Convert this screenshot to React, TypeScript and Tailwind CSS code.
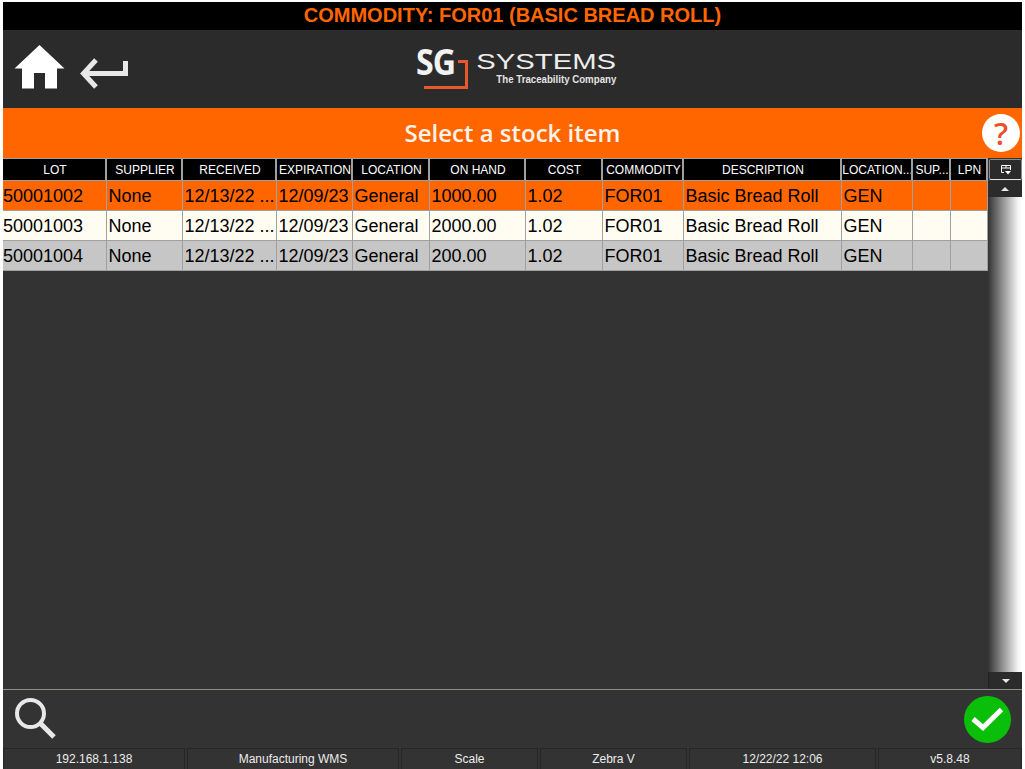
import React from 'react';

const columns = [
  { name: 'LOT', width: 'w-[104px]' },
  { name: 'SUPPLIER', width: 'w-[76px]' },
  { name: 'RECEIVED', width: 'w-[94px]' },
  { name: 'EXPIRATION', width: 'w-[76px]' },
  { name: 'LOCATION', width: 'w-[77px]' },
  { name: 'ON HAND', width: 'w-[96px]' },
  { name: 'COST', width: 'w-[77px]' },
  { name: 'COMMODITY', width: 'w-[81px]' },
  { name: 'DESCRIPTION', width: 'w-[158px]' },
  { name: 'LOCATION...', width: 'w-[71px]' },
  { name: 'SUP...', width: 'w-[38px]' },
  { name: 'LPN', width: 'w-[37px]' },
];

const rows = [
  { bg: 'bg-[#ff6600]', cells: ['50001002', 'None', '12/13/22 ...', '12/09/23', 'General', '1000.00', '1.02', 'FOR01', 'Basic Bread Roll', 'GEN', '', ''] },
  { bg: 'bg-[#fffdf2]', cells: ['50001003', 'None', '12/13/22 ...', '12/09/23', 'General', '2000.00', '1.02', 'FOR01', 'Basic Bread Roll', 'GEN', '', ''] },
  { bg: 'bg-[#c6c6c6]', cells: ['50001004', 'None', '12/13/22 ...', '12/09/23', 'General', '200.00', '1.02', 'FOR01', 'Basic Bread Roll', 'GEN', '', ''] },
];

const statusItems = [
  { text: '192.168.1.138', width: 'w-[182px]' },
  { text: 'Manufacturing WMS', width: 'w-[212px]' },
  { text: 'Scale', width: 'w-[137px]' },
  { text: 'Zebra V', width: 'w-[147px]' },
  { text: '12/22/22 12:06', width: 'w-[187px]' },
  { text: 'v5.8.48', width: 'flex-1' },
];

const Logo = () => (
  <div className="flex items-start h-[50px] w-[200px] ml-[7px] relative">
    <span className="font-['Open_Sans',sans-serif] font-bold text-[35px] leading-[38px] text-[#f2f2f2] tracking-[-1px] scale-x-[0.92] origin-left w-[62px] shrink-0 mt-[-1px]">SG</span>
    <div className="absolute left-[8px] top-[16px] w-[44px] h-[29px] border-r-[3px] border-b-[3px] border-[#e8582a]" />
    <div className="absolute left-[42px] top-[16px] w-[10px] h-[3px] bg-[#e8582a]" />
    <div className="flex flex-col items-end w-[138px] shrink-0">
      <span className="font-['Liberation_Sans',sans-serif] text-[22px] leading-[24px] text-[#ececec] scale-x-[1.33] origin-right whitespace-nowrap mt-[6px]">SYSTEMS</span>
      <span className="font-['Liberation_Sans',sans-serif] font-bold text-[11px] leading-[12px] text-[#e4e4e4] whitespace-nowrap scale-x-[0.88] origin-right mt-[-1px]">The Traceability Company</span>
    </div>
  </div>
);

export default function App() {
  return (
    <div className="w-[1025px] h-[769px] bg-white overflow-hidden pt-[2px] pl-[3px] pr-[3px]">
      <div className="h-[767px] flex flex-col bg-[#333333] font-['Liberation_Sans',sans-serif]">
        <div className="h-[28px] shrink-0 bg-black flex items-center justify-center pb-[2px] text-[#ff6600] font-bold text-[20px]">
          COMMODITY: FOR01 (BASIC BREAD ROLL)
        </div>

        <div className="h-[78px] shrink-0 bg-[#2b2b2b] relative flex items-center justify-center">
          <div className="absolute left-[11px] top-[14px] flex items-start gap-[14px]">
            <svg width="52" height="46" viewBox="0 0 52 46">
              <path d="M25.500 1 L50.500 24.500 L43 24.500 L43 44.500 L31 44.500 L31 29 L20 29 L20 44.500 L8 44.500 L8 24.500 L0.500 24.500 Z" fill="#ffffff" />
            </svg>
            <svg width="50" height="34" viewBox="0 0 50 34" className="mt-[12px]">
              <path d="M45.500 5 L45.500 17.500 L6 17.500 M16 4 L3.500 17.500 L16 31" fill="none" stroke="#e8e8e8" strokeWidth="5" />
            </svg>
          </div>
          <Logo />
        </div>

        <div className="h-[50px] shrink-0 bg-[#ff6600] relative flex items-center justify-center">
          <span className="font-['Open_Sans',sans-serif] font-semibold text-[24px] text-[#fdf3ea]">Select a stock item</span>
          <div className="absolute right-[2px] top-[6px] w-[38px] h-[38px] rounded-full bg-white flex items-center justify-center font-['Open_Sans',sans-serif] font-semibold text-[31px] text-[#e8502a]">
            ?
          </div>
        </div>

        <div className="flex-1 flex min-h-0 border-b border-[#8f8f88]">
          <div className="w-[985px] shrink-0">
            <div className="flex h-[23px] bg-black border-y border-[#a0a0a0] box-border">
              {columns.map((col) => (
                <div
                  key={col.name}
                  className={`${col.width} shrink-0 border-r-[2px] border-[#a0a0a0] flex items-center justify-center pt-[1px] pl-[2px] text-white text-[12px] whitespace-nowrap overflow-hidden`}
                >
                  {col.name}
                </div>
              ))}
            </div>
            {rows.map((row) => (
              <div key={row.cells[0]} className={`flex h-[30px] ${row.bg} border-b border-[#a0a0a0]`}>
                {row.cells.map((cell, i) => (
                  <div
                    key={columns[i].name}
                    className={`${columns[i].width} shrink-0 border-r border-[#a0a0a0] ${i === 0 ? 'pl-0' : 'pl-[1.500px]'} flex items-center pt-[1px] text-black text-[18px] whitespace-nowrap overflow-hidden`}
                  >
                    {cell}
                  </div>
                ))}
              </div>
            ))}
          </div>

          <div className="flex-1 flex flex-col">
            <div className="h-[21px] mt-[1px] shrink-0 ml-[1px] bg-[#2b2b2b] border border-[#8a8a8a] border-b-[#e0e0e0] rounded-[2px] flex items-center justify-center">
              <svg width="12" height="12" viewBox="0 0 12 12">
                <path d="M1.500 1.500 H10.500 V6 M1.500 1.500 V8.500 H4 M1.500 4 H10.500 M6 1.500 V4" fill="none" stroke="#ffffff" strokeWidth="1" />
                <path d="M5 7 H11 L8 10.500 Z" fill="#ffffff" />
              </svg>
            </div>
            <div className="h-[16px] mt-[1px] shrink-0 bg-[#2b2b2b] flex items-center justify-center">
              <div className="w-0 h-0 border-x-[4px] border-x-transparent border-b-[4px] border-b-[#e8e8e8]" />
            </div>
            <div className="flex-1 bg-[linear-gradient(to_right,#333333,#f4f4f4_88%,#ffffff)]" />
            <div className="h-[17px] shrink-0 bg-[#2b2b2b] border-l border-[#222222] flex items-center justify-center">
              <div className="w-0 h-0 border-x-[4px] border-x-transparent border-t-[4px] border-t-[#e8e8e8]" />
            </div>
          </div>
        </div>

        <div className="h-[58px] shrink-0 flex items-center justify-between pl-[11px] pr-[12px]">
          <svg width="44" height="44" viewBox="0 0 44 44" className="mb-[1px]">
            <circle cx="16.500" cy="16.500" r="13.500" fill="none" stroke="#e8e8e8" strokeWidth="4" />
            <path d="M26.500 26.500 L40 40" stroke="#e8e8e8" strokeWidth="5" />
          </svg>
          <svg width="47" height="47" viewBox="0 0 47 47" className="mr-[-1px]">
            <circle cx="23.500" cy="23.500" r="23.500" fill="#09bf09" />
            <path d="M9 23 L19 31.500 L37.500 13.500" fill="none" stroke="#ffffff" strokeWidth="5" />
          </svg>
        </div>

        <div className="h-[21px] shrink-0 flex gap-[2px] text-[12px] text-[#ececec]">
          {statusItems.map((item) => (
            <div key={item.text} className={`${item.width} bg-[#333333] border-t border-x border-[#262626] flex items-center justify-center whitespace-nowrap`}>
              {item.text}
            </div>
          ))}
        </div>
      </div>
    </div>
  );
}
